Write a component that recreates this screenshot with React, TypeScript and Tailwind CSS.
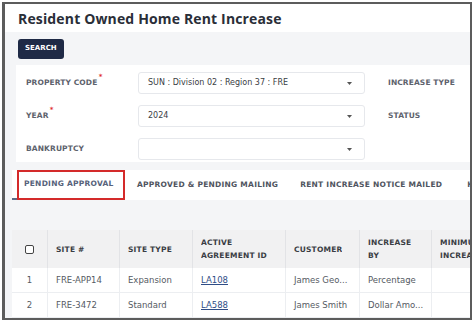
import React from 'react';

const font = { fontFamily: '"DejaVu Sans", "Open Sans", sans-serif' };

const Caret = () => (
  <svg width="7" height="5" viewBox="0 0 7 5" className="shrink-0">
    <path d="M1 1 L6 1 L3.5 4 Z" fill="#555" />
  </svg>
);

const FormRow: React.FC<{ label: string; required?: boolean; value?: string; caret?: boolean; right?: string }> = ({ label, required, value, caret, right }) => (
  <div className="flex items-center h-[22px]">
    <div className="w-[112px] text-[7.5px] font-bold text-[#5d626c] tracking-[0.1px]">
      <span className="relative">
        {label}
        {required && <span className="absolute -top-[4px] -right-[5px] text-[#e03030] text-[7px] leading-none">*</span>}
      </span>
    </div>
    <div className="w-[227px] h-[22px] border border-[#e6e8ec] rounded-[3px] flex items-center justify-between pl-[9px] pr-[11px]">
      <span className="text-[8px] text-[#3a3d44]">{value}</span>
      {caret && <Caret />}
    </div>
    {right && <div className="ml-[23px] text-[7.5px] font-bold text-[#5d626c] tracking-[0.1px]">{right}</div>}
  </div>
);

const cols = [
  { w: 'w-[36px]', label: '' },
  { w: 'w-[72px]', label: 'SITE #' },
  { w: 'w-[73px]', label: 'SITE TYPE' },
  { w: 'w-[93px]', label: 'ACTIVE\nAGREEMENT ID' },
  { w: 'w-[74px]', label: 'CUSTOMER' },
  { w: 'w-[72px]', label: 'INCREASE\nBY' },
  { w: 'w-[60px]', label: 'MINIMUM\nINCREASE' },
];

const rows = [
  ['1', 'FRE-APP14', 'Expansion', 'LA108', 'James Geo...', 'Percentage', ''],
  ['2', 'FRE-3472', 'Standard', 'LA588', 'James Smith', 'Dollar Amo...', ''],
];

export default function App() {
  return (
    <div className="w-[474px] h-[326px] bg-white overflow-hidden" style={font}>
      <div className="ml-[2px] mt-[2px] w-[470px] h-[318px] border-[2px] border-l-[3px] border-[#5c5c5c] bg-[#f4f5f7] overflow-hidden flex flex-col relative">
        <div className="h-[28px] shrink-0 bg-white pl-[13px] flex items-center text-[14px] font-bold text-[#2a2e38] tracking-[0.15px]" style={{ fontFamily: '"Open Sans", sans-serif' }}>
          Resident Owned Home Rent Increase
        </div>
        <div className="h-[33px] shrink-0 pl-[13px] flex items-center">
          <div className="h-[20px] px-[7px] rounded-[3px] bg-[#1f2a46] text-white text-[7px] font-bold flex items-center">SEARCH</div>
        </div>
        <div className="ml-[11px] bg-white h-[97px] shrink-0 pl-[10px] pt-[7px] flex flex-col gap-[11px]">
          <FormRow label="PROPERTY CODE" required value="SUN : Division 02 : Region 37 : FRE" caret right="INCREASE TYPE" />
          <FormRow label="YEAR" required value="2024" caret right="STATUS" />
          <FormRow label="BANKRUPTCY" caret />
        </div>
        <div className="h-[8px] shrink-0" />
        <div className="ml-[7px] h-[30px] shrink-0 bg-white flex items-end text-[7.5px] font-bold text-[#4f545e] tracking-[0.25px] whitespace-nowrap relative">
          <div className="w-[112px] shrink-0 h-[30px] flex items-center pl-[12px] border-b-2 border-[#5b6a86] text-[#56627a]">PENDING APPROVAL</div>
          <div className="shrink-0 h-[30px] flex items-center ml-[13px]">APPROVED &amp; PENDING MAILING</div>
          <div className="shrink-0 h-[30px] flex items-center ml-[22px]">RENT INCREASE NOTICE MAILED</div>
          <div className="shrink-0 h-[30px] flex items-center ml-[25px]">HISTORY</div>
          <div className="absolute left-[5px] top-0 w-[108px] h-[30px] border-2 border-[#d42a2a]" />
        </div>
        <div className="h-[30px] shrink-0" />
        <div className="ml-[7px] shrink-0 flex flex-col">
          <div className="flex h-[38px] bg-[#f1f1f2] text-[7.5px] font-bold text-[#3a3d44] tracking-[0.2px]">
            {cols.map((c, i) => (
              <div key={i} className={`${c.w} shrink-0 h-full border-r border-[#e2e3e6] flex items-center ${i === 0 ? 'justify-center' : 'pl-[8px]'}`}>
                {i === 0 ? (
                  <div className="w-[9px] h-[9px] border-[1.5px] border-[#444] rounded-[2px] bg-white" />
                ) : (
                  <span className="leading-[13px] whitespace-pre overflow-hidden">{c.label}</span>
                )}
              </div>
            ))}
          </div>
          {rows.map((r, ri) => (
            <div key={ri} className="flex h-[25px] bg-white border-b border-[#eceef1] text-[8.5px] text-[#555a63]">
              {r.map((v, i) => (
                <div key={i} className={`${cols[i].w} shrink-0 h-full border-r border-[#eceef1] flex items-center ${i === 0 ? 'justify-center' : 'pl-[8px]'} whitespace-nowrap overflow-hidden`}>
                  {i === 3 ? <span className="underline text-[#2f4d86]">{v}</span> : v}
                </div>
              ))}
            </div>
          ))}
        </div>
      </div>
    </div>
  );
}
